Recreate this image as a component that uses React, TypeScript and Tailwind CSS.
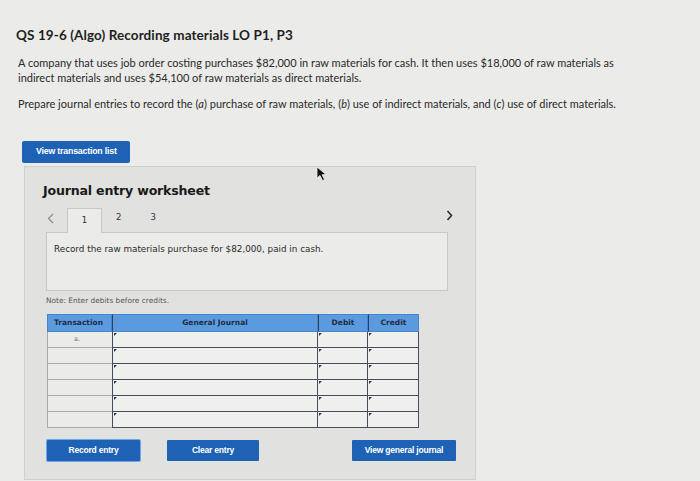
import React from 'react';

const rows = ['a.', '', '', '', '', ''];

const Marker: React.FC = () => (
  <span className="absolute left-[1px] top-[1px] w-0 h-0 border-t-[3px] border-r-[3px] border-t-[#2a3550] border-r-transparent" />
);

const App: React.FC = () => {
  return (
    <div className="relative min-h-screen w-[700px] h-[481px] overflow-hidden bg-[#ebebe9] pl-4 pt-[26px] text-[#1f1f1f]">
      {/* Question header */}
      <h1 className="font-['Lato',sans-serif] font-bold text-[13.5px] leading-[18px] tracking-[0.1px]">
        QS 19-6 (Algo) Recording materials LO P1, P3
      </h1>
      <p className="mt-[11px] ml-[2px] font-['Lato',sans-serif] text-[11px] leading-[15px] text-[#2a2a2a]">
        A company that uses job order costing purchases $82,000 in raw materials for cash. It then uses $18,000 of raw materials as
        <br />
        indirect materials and uses $54,100 of raw materials as direct materials.
      </p>
      <p className="mt-[11px] ml-[2px] font-['Lato',sans-serif] text-[11px] leading-[15px] text-[#2a2a2a]">
        Prepare journal entries to record the (<i>a</i>) purchase of raw materials, (<i>b</i>) use of indirect materials, and (<i>c</i>) use of direct materials.
      </p>

      <button className="block mt-[30px] ml-[6px] w-[108px] h-[22px] rounded-[2px] bg-[#1e62b6] text-white text-left pl-[14px] font-['Liberation_Sans',sans-serif] font-bold text-[8.8px] tracking-[-0.2px]">
        View transaction list
      </button>

      {/* Worksheet panel */}
      <div className="mt-[3px] ml-[8px] w-[452px] h-[314px] border border-[#cfcfcc] bg-[#e1e1df] pl-[21px] pt-[15px]">
        <h2 className="ml-[-3px] font-['DejaVu_Sans',sans-serif] font-bold text-[12.6px] leading-[18px] tracking-[-0.2px] text-[#1a1a1a]">
          Journal entry worksheet
        </h2>

        <div className="mt-[8px] flex items-end h-[24px] w-[407px] font-['DejaVu_Sans',sans-serif] text-[8.5px] text-[#333]">
          <svg className="mb-[8px] ml-[1px] mr-[13px]" width="7" height="11" viewBox="0 0 7 11">
            <path d="M6 1 L1.5 5.5 L6 10" fill="none" stroke="#8a8a88" strokeWidth="1.2" />
          </svg>
          <div className="w-[35px] h-[25px] border border-b-0 border-[#c8c8c6] bg-[#ebebe9] flex items-center justify-center pb-[2px] relative z-10 mb-[-1px]">
            1
          </div>
          <span className="mb-[8px] ml-[14px]">2</span>
          <span className="mb-[8px] ml-[29px]">3</span>
          <svg className="mb-[11px] ml-auto" width="7" height="11" viewBox="0 0 7 11">
            <path d="M1.5 1 L5.5 5.5 L1.5 10" fill="none" stroke="#2e2e2e" strokeWidth="1.6" />
          </svg>
        </div>

        <div className="w-[402px] h-[59px] border border-[#c8c8c6] bg-[#ebebe9] pl-[7px] pt-[10px] font-['DejaVu_Sans',sans-serif] text-[8.8px] text-[#2a2a2a]">
          Record the raw materials purchase for $82,000, paid in cash.
        </div>

        <p className="mt-[5px] font-['DejaVu_Sans',sans-serif] text-[7.4px] leading-[9px] text-[#555]">Note: Enter debits before credits.</p>

        {/* Journal table */}
        <div className="mt-[9px] ml-[1px] w-[372px] grid grid-cols-[65px_206px_50px_51px] font-['DejaVu_Sans',sans-serif]">
          <div className="h-[18px] bg-[#5a9be0] border border-[#4a85c8] text-[7.5px] font-bold text-[#1f2d45] flex items-center pl-[6px]">
            Transaction
          </div>
          <div className="h-[18px] bg-[#5a9be0] border border-[#4a85c8] border-l-[#27406a] text-[7.5px] font-bold text-[#1f2d45] flex items-center justify-center">
            General Journal
          </div>
          <div className="h-[18px] bg-[#5a9be0] border border-[#4a85c8] border-l-[#27406a] text-[7.5px] font-bold text-[#1f2d45] flex items-center justify-center">
            Debit
          </div>
          <div className="h-[18px] bg-[#5a9be0] border border-[#4a85c8] border-l-[#27406a] text-[7.5px] font-bold text-[#1f2d45] flex items-center justify-center">
            Credit
          </div>
          {rows.map((r, i) => (
            <React.Fragment key={i}>
              <div className="h-[16px] bg-[#ebebe9] border-l border-b border-[#a9a9a7] text-[6.5px] text-[#777] flex items-center justify-center pr-[6px]">
                {r}
              </div>
              <div className="relative h-[16px] bg-[#efefed] border-[1.5px] border-t-0 border-[#454c5c]">
                <Marker />
              </div>
              <div className="relative h-[16px] bg-[#efefed] border-[1.5px] border-t-0 border-l-0 border-[#454c5c]">
                <Marker />
              </div>
              <div className="relative h-[16px] bg-[#efefed] border-[1.5px] border-t-0 border-l-0 border-[#454c5c]">
                <Marker />
              </div>
            </React.Fragment>
          ))}
        </div>

        {/* Action buttons */}
        <div className="mt-[12px] flex items-center font-['Liberation_Sans',sans-serif] font-bold text-[8.5px] text-white tracking-[-0.2px]">
          <button className="ml-[1px] w-[93px] h-[21px] bg-[#1e62b6] ring-1 ring-[#6ea6e6] rounded-[1px]">Record entry</button>
          <button className="ml-[27px] w-[92px] h-[21px] bg-[#1e62b6] rounded-[1px]">Clear entry</button>
          <button className="ml-[93px] w-[104px] h-[21px] bg-[#1e62b6] rounded-[1px]">View general journal</button>
        </div>
      </div>

      {/* Mouse pointer */}
      <svg className="absolute left-[316px] top-[166px]" width="12" height="16" viewBox="0 0 12 16">
        <path d="M1 1 L1 12 L4 9.5 L6.5 14.5 L8.5 13.5 L6 8.8 L10 8.5 Z" fill="#111" stroke="#eee" strokeWidth="0.8" />
      </svg>
    </div>
  );
};

export default App;
